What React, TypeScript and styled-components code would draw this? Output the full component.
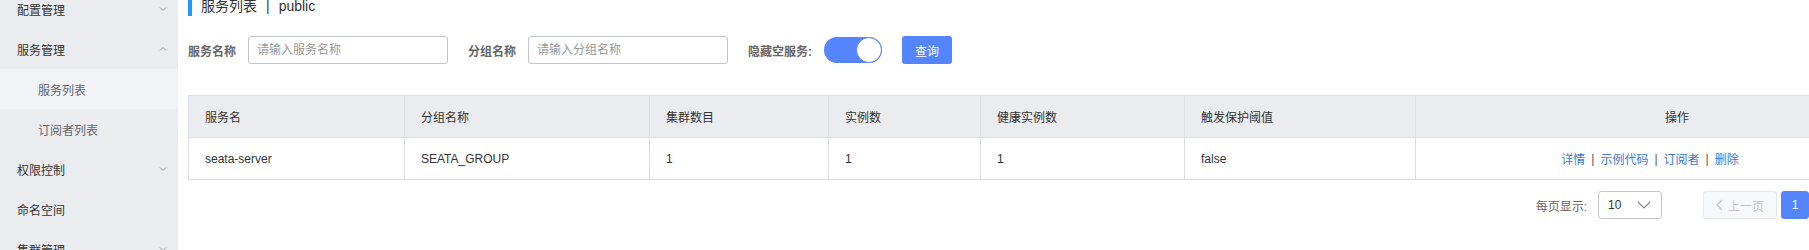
import React from "react";
import styled, { createGlobalStyle } from "styled-components";

const Global = createGlobalStyle`
  html, body { margin: 0; padding: 0; background: #fff; overflow: hidden; }
  body { font-family: "Liberation Sans", Arial, "Noto Sans CJK SC", sans-serif; font-size: 12px; color: #333; }
  * { box-sizing: border-box; }
`;

const Page = styled.div`
  display: flex;
  width: 2000px;
  height: 250px;
  overflow: hidden;
`;

const Sidebar = styled.nav`
  flex: none;
  width: 178px;
  height: 250px;
  background: #ebecf0;
  overflow: hidden;
`;

const MenuList = styled.ul`
  list-style: none;
  margin: -11px 0 0;
  padding: 0;
`;

const MenuItem = styled.li<{ $sub?: boolean; $active?: boolean }>`
  display: flex;
  align-items: center;
  justify-content: space-between;
  height: 40px;
  padding: 0 11px 0 ${(p) => (p.$sub ? 38 : 17)}px;
  font-size: 12px;
  color: ${(p) => (p.$sub ? "#666" : "#333")};
  background: ${(p) => (p.$active ? "#f2f3f7" : "transparent")};
`;

const Chevron = styled.svg`
  width: 8px;
  height: 8px;
  color: #999;
`;

const Main = styled.main`
  flex: none;
  width: 1760px;
  padding-left: 10px;
`;

const Title = styled.h1`
  margin: -4px 0 0;
  height: 20px;
  line-height: 20px;
  border-left: 4px solid #209bfa;
  padding-left: 9px;
  font-size: 14px;
  font-weight: normal;
  color: #333;
`;

const TitleSep = styled.span`
  margin: 0 9px;
`;

const FilterBar = styled.div`
  display: flex;
  align-items: center;
  margin-top: 20px;
  height: 28px;
`;

const Field = styled.div`
  display: flex;
  align-items: center;
  margin-right: 20px;
`;

const Label = styled.label`
  font-size: 12px;
  font-weight: bold;
  color: #666;
  margin-right: 12px;
`;

const Input = styled.input`
  width: 200px;
  height: 28px;
  border: 1px solid #c4c6cf;
  border-radius: 3px;
  padding: 0 8px;
  font-size: 12px;
  font-family: inherit;
  color: #333;
  outline: none;
  &::placeholder { color: #999; }
`;

const Switch = styled.div`
  position: relative;
  width: 58px;
  height: 26px;
  border-radius: 13px;
  background: #5584ff;
`;

const Knob = styled.span`
  position: absolute;
  right: 0;
  top: 0;
  width: 26px;
  height: 26px;
  border-radius: 50%;
  background: #fff;
  border: 1px solid #5584ff;
`;

const PrimaryButton = styled.button`
  width: 50px;
  height: 28px;
  border: none;
  border-radius: 3px;
  background: #5584ff;
  color: #fff;
  font-size: 12px;
  font-family: inherit;
  padding: 0;
`;

const Table = styled.div`
  margin-top: 31px;
  display: grid;
  grid-template-columns: 216px 245px 179px 152px 204px 231px 522px;
  border: 1px solid #dcdee3;
  border-bottom: none;
  width: max-content;
`;

const Cell = styled.div<{ $head?: boolean; $center?: boolean; $last?: boolean }>`
  display: flex;
  align-items: center;
  justify-content: ${(p) => (p.$center ? "center" : "flex-start")};
  height: 42px;
  padding: 0 16px;
  font-size: 12px;
  color: #333;
  background: ${(p) => (p.$head ? "#ebecf0" : "#fff")};
  border-bottom: 1px solid #dcdee3;
  border-right: ${(p) => (p.$last ? "none" : "1px solid #dcdee3")};
`;

const Ops = styled.div`
  display: flex;
  align-items: center;
  padding-right: 54px;
`;

const Link = styled.a`
  color: #3a78dd;
  cursor: pointer;
`;

const OpSep = styled.span`
  margin: 0 6px;
  color: #555;
`;

const PagerRow = styled.div`
  display: flex;
  align-items: center;
  justify-content: flex-end;
  margin-top: 11px;
  width: 1749px;
  padding-right: 62px;
`;

const PagerLabel = styled.span`
  font-size: 12px;
  color: #666;
  margin-right: 11px;
`;

const SizeSelect = styled.div`
  display: flex;
  align-items: center;
  justify-content: space-between;
  width: 64px;
  height: 28px;
  border: 1px solid #c4c6cf;
  border-radius: 3px;
  padding: 0 10px 0 9px;
  font-size: 12px;
  color: #333;
  margin-right: 37px;
`;

const PageButton = styled.button<{ $current?: boolean; $disabled?: boolean }>`
  display: flex;
  align-items: center;
  justify-content: center;
  gap: 5px;
  height: 28px;
  min-width: 28px;
  padding: 0 ${(p) => (p.$current ? 0 : 12)}px;
  margin-left: 4px;
  border-radius: 3px;
  font-size: 12px;
  font-family: inherit;
  border: 1px solid ${(p) => (p.$current ? "#5584ff" : p.$disabled ? "#e6e7eb" : "#c4c6cf")};
  background: ${(p) => (p.$current ? "#5584ff" : p.$disabled ? "#f7f8fa" : "#fff")};
  color: ${(p) => (p.$current ? "#fff" : p.$disabled ? "#c4c6cf" : "#333")};
`;

const Down = () => (
  <Chevron viewBox="0 0 8 8" fill="none" stroke="currentColor" strokeWidth="1">
    <path d="M1 2.5 L4 5.5 L7 2.5" />
  </Chevron>
);
const Up = () => (
  <Chevron viewBox="0 0 8 8" fill="none" stroke="currentColor" strokeWidth="1">
    <path d="M1 5.5 L4 2.5 L7 5.5" />
  </Chevron>
);

const SelectArrow = styled.svg`
  width: 14px;
  height: 8px;
  color: #888;
`;

const LeftArrow = styled.svg`
  width: 7px;
  height: 12px;
  color: #c4c6cf;
`;

const menu: { label: string; sub?: boolean; active?: boolean; icon?: "down" | "up" }[] = [
  { label: "配置管理", icon: "down" },
  { label: "服务管理", icon: "up" },
  { label: "服务列表", sub: true, active: true },
  { label: "订阅者列表", sub: true },
  { label: "权限控制", icon: "down" },
  { label: "命名空间" },
  { label: "集群管理", icon: "down" },
];

const headers = ["服务名", "分组名称", "集群数目", "实例数", "健康实例数", "触发保护阈值"];
const row = ["seata-server", "SEATA_GROUP", "1", "1", "1", "false"];
const ops = ["详情", "示例代码", "订阅者", "删除"];

export default function App() {
  return (
    <>
      <Global />
      <Page>
        <Sidebar>
          <MenuList>
            {menu.map((m) => (
              <MenuItem key={m.label} $sub={m.sub} $active={m.active}>
                <span>{m.label}</span>
                {m.icon === "down" && <Down />}
                {m.icon === "up" && <Up />}
              </MenuItem>
            ))}
          </MenuList>
        </Sidebar>
        <Main>
          <Title>
            服务列表<TitleSep>|</TitleSep>public
          </Title>
          <FilterBar>
            <Field>
              <Label>服务名称</Label>
              <Input placeholder="请输入服务名称" />
            </Field>
            <Field>
              <Label>分组名称</Label>
              <Input placeholder="请输入分组名称" />
            </Field>
            <Field>
              <Label>隐藏空服务:</Label>
              <Switch>
                <Knob />
              </Switch>
            </Field>
            <PrimaryButton>查询</PrimaryButton>
          </FilterBar>
          <Table>
            {headers.map((h) => (
              <Cell key={h} $head>
                {h}
              </Cell>
            ))}
            <Cell $head $center $last>
              操作
            </Cell>
            {row.map((v, i) => (
              <Cell key={i}>{v}</Cell>
            ))}
            <Cell $center $last>
              <Ops>
                {ops.map((o, i) => (
                  <React.Fragment key={o}>
                    {i > 0 && <OpSep>|</OpSep>}
                    <Link>{o}</Link>
                  </React.Fragment>
                ))}
              </Ops>
            </Cell>
          </Table>
          <PagerRow>
            <PagerLabel>每页显示:</PagerLabel>
            <SizeSelect>
              <span>10</span>
              <SelectArrow viewBox="0 0 14 8" fill="none" stroke="currentColor" strokeWidth="1.2">
                <path d="M1 1 L7 7 L13 1" />
              </SelectArrow>
            </SizeSelect>
            <PageButton $disabled>
              <LeftArrow viewBox="0 0 7 12" fill="none" stroke="currentColor" strokeWidth="1.3">
                <path d="M6 1 L1 6 L6 11" />
              </LeftArrow>
              上一页
            </PageButton>
            <PageButton $current>1</PageButton>
            <PageButton>下一页</PageButton>
          </PagerRow>
        </Main>
      </Page>
    </>
  );
}
